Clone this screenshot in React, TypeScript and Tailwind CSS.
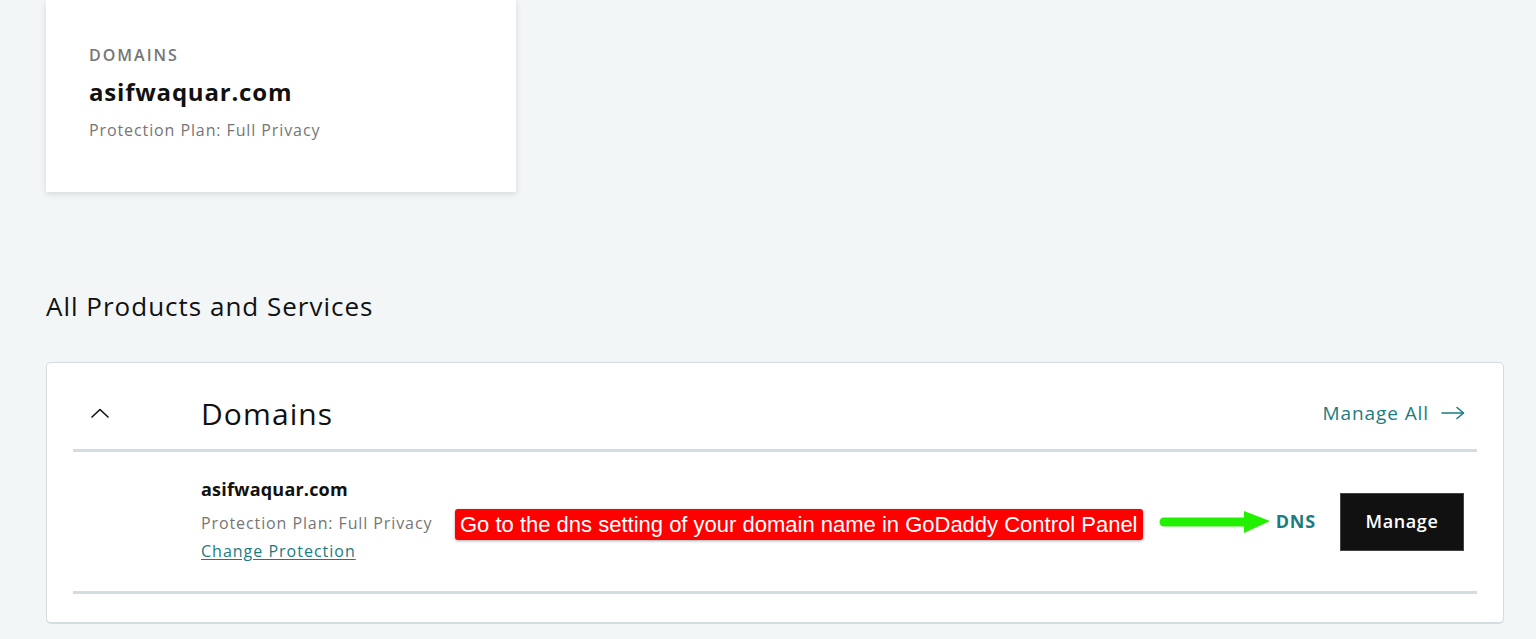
import React from 'react';

const font = { fontFamily: '"Open Sans", "Noto Sans", sans-serif' };

function ChevronUp() {
  return (
    <svg width="18" height="10" viewBox="0 0 18 10" fill="none">
      <polyline points="1,9 9,1.5 17,9" stroke="#111" strokeWidth="1.6" strokeLinecap="round" strokeLinejoin="round" />
    </svg>
  );
}

function LongArrow() {
  return (
    <svg width="24" height="14" viewBox="0 0 24 14" fill="none">
      <line x1="1" y1="7" x2="22" y2="7" stroke="#1b7c81" strokeWidth="1.6" strokeLinecap="round" />
      <polyline points="16,1.5 22.5,7 16,12.5" stroke="#1b7c81" strokeWidth="1.6" strokeLinecap="round" strokeLinejoin="round" />
    </svg>
  );
}

function GreenArrow() {
  return (
    <svg width="112" height="26" viewBox="0 0 112 26" fill="none">
      <line x1="5" y1="13" x2="88" y2="13" stroke="#22f000" strokeWidth="9" strokeLinecap="round" />
      <polygon points="85,2 111,12 85,24" fill="#22f000" />
    </svg>
  );
}

export default function App() {
  return (
    <div className="min-h-[639px] bg-[#f3f6f7] pl-[46px] pr-[32px] pb-6" style={font}>
      {/* Featured domain card */}
      <div className="w-[470px] h-[192px] bg-white shadow-[0_2px_6px_rgba(0,0,0,0.12)] pl-[43px] pt-[45px]">
        <div className="text-[16px] leading-5 font-semibold tracking-[2px] text-[#767676]">DOMAINS</div>
        <div className="mt-[11px] text-[24px] leading-8 font-bold tracking-[0.8px] text-[#111]">asifwaquar.com</div>
        <div className="mt-[10px] text-[16px] leading-6 tracking-[0.9px] text-[#767676]">Protection Plan: Full Privacy</div>
      </div>

      <h2 className="mt-[98px] text-[26px] leading-8 tracking-[1px] text-[#111]">All Products and Services</h2>

      {/* Products card */}
      <div className="mt-[40px] bg-white border border-[#d5dce0] border-b-2 rounded-[5px] px-[26px] pb-[28px]">
        <div className="h-[86px] pt-[14px] flex items-center">
          <div className="w-[128px] pl-[18px]">
            <ChevronUp />
          </div>
          <div className="text-[30px] leading-10 tracking-[1.1px] text-[#111] pt-[2px]">Domains</div>
          <a className="ml-auto mr-[12px] flex items-center gap-[12px] text-[19px] tracking-[0.9px] text-[#1b7c81]">
            Manage All
            <LongArrow />
          </a>
        </div>
        <div className="h-[3px] bg-[#d5dce0]" />

        <div className="h-[139px] flex items-center">
          <div className="w-[382px] shrink-0 pl-[128px] pb-[4px]">
            <div className="text-[18px] leading-6 font-bold tracking-[0.2px] text-[#111]">asifwaquar.com</div>
            <div className="mt-[10px] text-[16px] leading-6 tracking-[0.9px] text-[#767676] whitespace-nowrap">Protection Plan: Full Privacy</div>
            <a className="block mt-[4px] text-[16px] leading-6 tracking-[1px] text-[#1b7c81] underline underline-offset-2">Change Protection</a>
          </div>

          <div
            className="mt-[6px] h-[31px] px-[5px] flex items-center bg-[#ff0000] rounded-[3px] shadow-[0_1px_3px_rgba(0,0,0,0.35)] text-white text-[22px] whitespace-nowrap"
            style={{ fontFamily: '"Liberation Sans", Arial, sans-serif' }}
          >
            Go to the dns setting of your domain name in GoDaddy Control Panel
          </div>

          <div className="ml-auto flex items-center">
            <GreenArrow />
            <span className="ml-[5px] text-[18px] font-bold tracking-[0.8px] text-[#1b7c81]">DNS</span>
            <button className="ml-[24px] mr-[13px] w-[124px] h-[58px] bg-[#111] text-white text-[18px] font-semibold tracking-[0.6px] border border-[#444]">
              Manage
            </button>
          </div>
        </div>
        <div className="h-[3px] bg-[#d5dce0]" />
      </div>
    </div>
  );
}
